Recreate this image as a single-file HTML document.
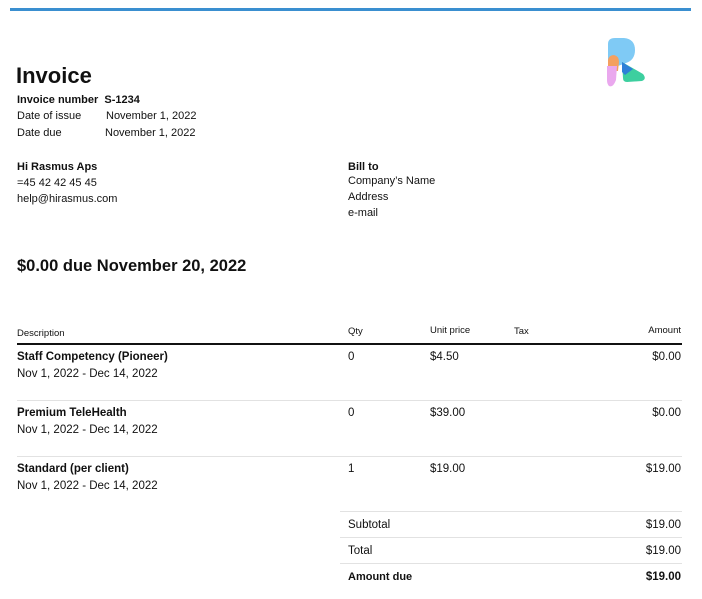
<!DOCTYPE html>
<html><head><meta charset="utf-8"><style>
body{margin:0;width:702px;height:599px;background:#fff;position:relative;overflow:hidden;font-family:"Liberation Sans",Arial,sans-serif;color:#111}
.t{position:absolute;white-space:nowrap;line-height:14px;font-size:11.5px}
.b{font-weight:bold}
.r{text-align:right}
.s{font-size:9.5px}
.l{position:absolute;height:1px;background:#e2e2e2}
</style></head><body>
<div style="position:absolute;left:10px;top:8px;width:681px;height:3px;background:#3a8fd0"></div>
<svg style="position:absolute;left:600px;top:34px" width="50" height="56" viewBox="600 34 50 56">
<path d="M608 44 Q608 38 615 38 L624 38 Q635 39 635 50 Q635 60 626 63 L618 66 L608 60 Z" fill="#7fcaf5"/>
<path d="M608 60 Q609 55 614 55 Q619 56 619 62 L618 71 L608 71 Z" fill="#f4a060"/>
<path d="M607 66 L617 66 L616 80 Q613 88 609 86 Q607 84 607 80 Z" fill="#eaa8ee"/>
<path d="M622 62 L643 74 Q647 79 642 81 L627 82 Q623 82 623 78 Z" fill="#3dcf9f"/>
<path d="M622 62 L633 69 L625 75 L622 72 Z" fill="#2e7fd8"/>
</svg>
<div class="t b" style="left:16px;top:64px;font-size:22px;line-height:24px">Invoice</div>
<div class="t b" style="left:17px;top:93px;font-size:11px">Invoice number&nbsp;&nbsp;S-1234</div>
<div class="t" style="left:17px;top:109px;font-size:11px">Date of issue</div>
<div class="t" style="left:106px;top:109px;font-size:11px">November 1, 2022</div>
<div class="t" style="left:17px;top:126px;font-size:11px">Date due</div>
<div class="t" style="left:105px;top:126px;font-size:11px">November 1, 2022</div>
<div class="t b" style="left:17px;top:160px;font-size:11px">Hi Rasmus Aps</div>
<div class="t" style="left:17px;top:176px;font-size:11px">=45 42 42 45 45</div>
<div class="t" style="left:17px;top:192px;font-size:11px">help@hirasmus.com</div>
<div class="t b" style="left:348px;top:160px;font-size:11px">Bill to</div>
<div class="t" style="left:348px;top:174px;font-size:11px">Company’s Name</div>
<div class="t" style="left:348px;top:190px;font-size:11px">Address</div>
<div class="t" style="left:348px;top:206px;font-size:11px">e-mail</div>
<div class="t b" style="left:17px;top:256px;font-size:16.5px;line-height:20px">$0.00 due November 20, 2022</div>
<div class="t s" style="left:17px;top:327px">Description</div>
<div class="t s" style="left:348px;top:325px">Qty</div>
<div class="t s" style="left:430px;top:324px">Unit price</div>
<div class="t s" style="left:514px;top:325px">Tax</div>
<div class="t s r" style="right:21px;top:324px">Amount</div>
<div style="position:absolute;left:17px;top:343px;width:665px;height:2px;background:#111"></div>

<div class="t b" style="left:17px;top:350px">Staff Competency (Pioneer)</div>
<div class="t" style="left:17px;top:367px">Nov 1, 2022 - Dec 14, 2022</div>
<div class="t" style="left:348px;top:350px">0</div>
<div class="t" style="left:430px;top:350px">$4.50</div>
<div class="t r" style="right:21px;top:350px">$0.00</div>
<div class="l" style="left:17px;top:400px;width:665px"></div>

<div class="t b" style="left:17px;top:406px">Premium TeleHealth</div>
<div class="t" style="left:17px;top:423px">Nov 1, 2022 - Dec 14, 2022</div>
<div class="t" style="left:348px;top:406px">0</div>
<div class="t" style="left:430px;top:406px">$39.00</div>
<div class="t r" style="right:21px;top:406px">$0.00</div>
<div class="l" style="left:17px;top:456px;width:665px"></div>

<div class="t b" style="left:17px;top:462px">Standard (per client)</div>
<div class="t" style="left:17px;top:479px">Nov 1, 2022 - Dec 14, 2022</div>
<div class="t" style="left:348px;top:462px">1</div>
<div class="t" style="left:430px;top:462px">$19.00</div>
<div class="t r" style="right:21px;top:462px">$19.00</div>

<div class="l" style="left:340px;top:511px;width:342px"></div>
<div class="t" style="left:348px;top:518px">Subtotal</div>
<div class="t r" style="right:21px;top:518px">$19.00</div>
<div class="l" style="left:340px;top:537px;width:342px"></div>
<div class="t" style="left:348px;top:544px">Total</div>
<div class="t r" style="right:21px;top:544px">$19.00</div>
<div class="l" style="left:340px;top:563px;width:342px"></div>
<div class="t b" style="left:348px;top:570px;font-size:11px">Amount due</div>
<div class="t b r" style="right:21px;top:570px">$19.00</div>
</body></html>
